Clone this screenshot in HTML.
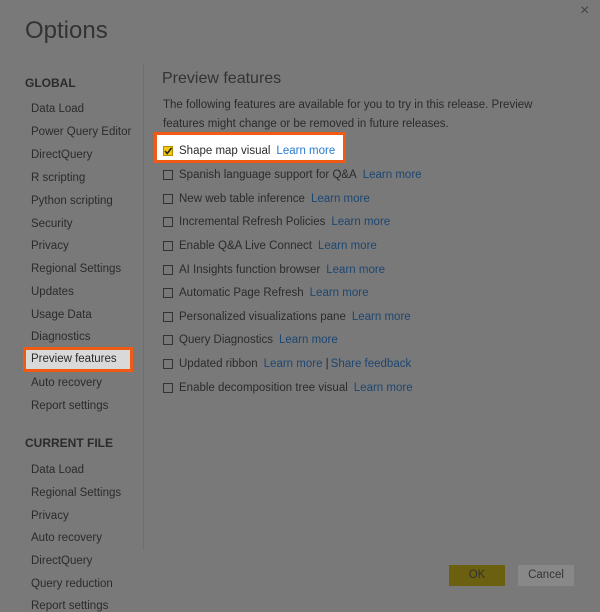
<!DOCTYPE html>
<html><head><style>
body{margin:0;width:600px;height:610px;background:#797979;font-family:"Liberation Sans",sans-serif;color:#2b2b2b;position:relative;overflow:hidden;font-size:11.5px}
.a{position:absolute;white-space:nowrap}
.nav{left:31px}
.h{font-weight:bold;font-size:12px;left:25px}
.f{left:163px}
.cb{display:inline-block;width:10px;height:10px;border:1px solid #333;vertical-align:-2px;margin-right:6px;box-sizing:border-box;position:relative}
.l{color:#1d4670;margin-left:6px}
</style></head><body>
<div class="a" style="left:25px;top:17px;font-size:24px;color:#333">Options</div>
<div class="a" style="left:580px;top:2px;font-size:16px;color:#444">×</div>
<div class="a" style="left:143px;top:64px;width:1px;height:486px;background:#6e6e6e"></div>
<div class="a h" style="top:76px">GLOBAL</div>
<div class="a nav" style="top:103px">Data Load</div>
<div class="a nav" style="top:126px">Power Query Editor</div>
<div class="a nav" style="top:149px">DirectQuery</div>
<div class="a nav" style="top:172px">R scripting</div>
<div class="a nav" style="top:195px">Python scripting</div>
<div class="a nav" style="top:218px">Security</div>
<div class="a nav" style="top:240px">Privacy</div>
<div class="a nav" style="top:263px">Regional Settings</div>
<div class="a nav" style="top:286px">Updates</div>
<div class="a nav" style="top:309px">Usage Data</div>
<div class="a nav" style="top:331px">Diagnostics</div>
<div class="a" style="left:23px;top:347px;width:104px;height:19px;background:#d9d9d9;border:3px solid #f05a14"></div>
<div class="a nav" style="top:353px">Preview features</div>
<div class="a nav" style="top:377px">Auto recovery</div>
<div class="a nav" style="top:400px">Report settings</div>
<div class="a h" style="top:436px">CURRENT FILE</div>
<div class="a nav" style="top:464px">Data Load</div>
<div class="a nav" style="top:487px">Regional Settings</div>
<div class="a nav" style="top:510px">Privacy</div>
<div class="a nav" style="top:532px">Auto recovery</div>
<div class="a nav" style="top:555px">DirectQuery</div>
<div class="a nav" style="top:578px">Query reduction</div>
<div class="a nav" style="top:600px">Report settings</div>

<div class="a" style="left:162px;top:70px;font-size:16px;color:#333">Preview features</div>
<div class="a" style="left:163px;top:96px;line-height:19px">The following features are available for you to try in this release. Preview<br>features might change or be removed in future releases.</div>
<div class="a" style="left:154px;top:132px;width:186px;height:25px;background:#fff;border:3px solid #f05a14"></div>
<div class="a f" style="top:145px"><span class="cb" style="background:#f2c811;border-color:#b09000"><svg width="10" height="10" style="position:absolute;left:-1px;top:-1px"><path d="M2 5 L4.2 7.5 L8.5 2" stroke="#222" stroke-width="1.6" fill="none"/></svg></span>Shape map visual<span class="l" style="color:#2b7bd0">Learn more</span></div>
<div class="a f" style="top:169px"><span class="cb"></span>Spanish language support for Q&amp;A<span class="l">Learn more</span></div>
<div class="a f" style="top:193px"><span class="cb"></span>New web table inference<span class="l">Learn more</span></div>
<div class="a f" style="top:216px"><span class="cb"></span>Incremental Refresh Policies<span class="l">Learn more</span></div>
<div class="a f" style="top:240px"><span class="cb"></span>Enable Q&amp;A Live Connect<span class="l">Learn more</span></div>
<div class="a f" style="top:264px"><span class="cb"></span>AI Insights function browser<span class="l">Learn more</span></div>
<div class="a f" style="top:287px"><span class="cb"></span>Automatic Page Refresh<span class="l">Learn more</span></div>
<div class="a f" style="top:311px"><span class="cb"></span>Personalized visualizations pane<span class="l">Learn more</span></div>
<div class="a f" style="top:334px"><span class="cb"></span>Query Diagnostics<span class="l">Learn more</span></div>
<div class="a f" style="top:358px"><span class="cb"></span>Updated ribbon<span class="l">Learn more</span> <span style="color:#222">|</span><span class="l" style="margin-left:2px">Share feedback</span></div>
<div class="a f" style="top:382px"><span class="cb"></span>Enable decomposition tree visual<span class="l">Learn more</span></div>

<div class="a" style="left:449px;top:565px;width:56px;height:21px;background:#6b5f10;text-align:center;line-height:21px;color:#333">OK</div>
<div class="a" style="left:518px;top:565px;width:56px;height:21px;background:#888;text-align:center;line-height:21px;color:#333">Cancel</div>
</body></html>
